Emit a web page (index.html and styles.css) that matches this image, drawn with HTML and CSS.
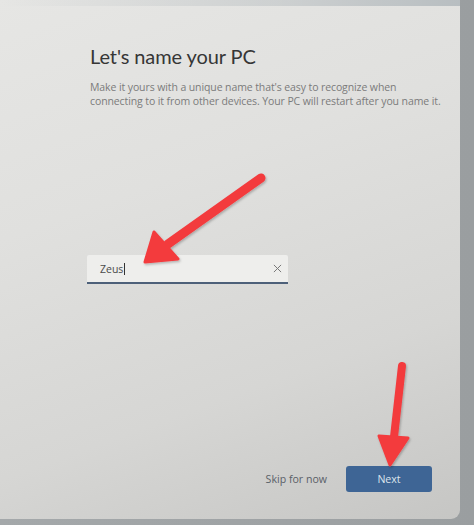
FILE: index.html
```html
<!DOCTYPE html>
<html lang="en">
<head>
<meta charset="utf-8">
<title>Let's name your PC</title>
<link rel="stylesheet" href="styles.css">
</head>
<body>
<div class="bezel">
  <main class="screen">
    <div class="topglow"></div>
    <section class="content">
      <h1 class="title">Let's name your PC</h1>
      <p class="desc">Make it yours with a unique name that's easy to recognize when<br>connecting to it from other devices. Your PC will restart after you name it.</p>
      <div class="field">
        <span class="value">Zeus</span><span class="caret"></span>
        <svg class="clear" viewBox="0 0 10 10" width="9" height="9"><path d="M1 1 L9 9 M9 1 L1 9" stroke="#777" stroke-width="1.1" fill="none"/></svg>
      </div>
    </section>
    <footer class="actions">
      <span class="skip">Skip for now</span>
      <span class="next">Next</span>
    </footer>
  </main>
  <svg class="arrows" viewBox="0 0 474 525" width="474" height="525">
    <defs>
      <filter id="sh" x="-20%" y="-20%" width="140%" height="140%">
        <feDropShadow dx="1" dy="1.5" stdDeviation="1.2" flood-color="#000" flood-opacity="0.25"/>
      </filter>
    </defs>
    <g filter="url(#sh)" fill="#f33b3e" stroke="#f33b3e">
      <path d="M261 178 L168 244" stroke-width="9" stroke-linecap="round" fill="none"/>
      <path d="M145 262 L154 232 L178 259 Z" stroke-width="3" stroke-linejoin="round"/>
      <path d="M402 366 L394 437" stroke-width="8" stroke-linecap="round" fill="none"/>
      <path d="M390 465 L379 436 L408 438 Z" stroke-width="3" stroke-linejoin="round"/>
    </g>
  </svg>
</div>
</body>
</html>
```
FILE: styles.css
```css
html, body {
  margin: 0;
  padding: 0;
}
body {
  width: 474px;
  height: 525px;
  overflow: hidden;
  background: #9ea2a4;
  font-family: "Open Sans", "Noto Sans", sans-serif;
}
.bezel {
  position: relative;
  width: 474px;
  height: 525px;
  background: linear-gradient(90deg, #a4a8aa 0%, #9a9ea0 100%);
}
.screen {
  position: relative;
  width: 460px;
  height: 519px;
  border-radius: 0 0 9px 0;
  background:
    linear-gradient(160deg, #e6e6e4 0%, #e0e0de 35%, #d6d6d4 70%, #c6c6c4 100%);
  display: flex;
  flex-direction: column;
  box-sizing: border-box;
}
.topglow {
  position: absolute;
  left: 0;
  top: 0;
  right: 0;
  height: 6px;
  background: linear-gradient(90deg, rgba(190,196,198,0) 0%, rgba(184,190,193,0.5) 60%, #b8bec1 100%);
}
.content {
  padding-left: 90px;
  padding-top: 43px;
}
.title {
  margin: 0;
  font-family: "Lato", "Open Sans", sans-serif;
  font-size: 20px;
  line-height: 26px;
  font-weight: 400;
  color: #363636;
  letter-spacing: -0.1px;
}
.desc {
  margin: 12px 0 0;
  font-size: 10.5px;
  line-height: 13.5px;
  color: #7b7b7b;
  letter-spacing: -0.1px;
}
.field {
  margin-top: 147px;
  margin-left: -3px;
  width: 201px;
  height: 29px;
  box-sizing: border-box;
  background: #eeeeec;
  border-bottom: 2px solid #4d6079;
  border-radius: 2px 2px 0 0;
  display: flex;
  align-items: center;
  padding-left: 13px;
  padding-right: 6px;
  font-size: 10.5px;
  color: #4a4a4a;
}
.caret {
  width: 1px;
  height: 12px;
  background: #333;
  margin-left: 1px;
}
.clear {
  margin-left: auto;
}
.actions {
  margin-top: auto;
  display: flex;
  justify-content: flex-end;
  align-items: center;
  gap: 19px;
  padding: 0 28px 27px 0;
}
.skip {
  font-size: 10.6px;
  color: #5a6068;
}
.next {
  width: 86px;
  height: 26px;
  border-radius: 3px;
  background: #3e6595;
  color: #dde4ec;
  font-size: 10.6px;
  display: flex;
  align-items: center;
  justify-content: center;
}
.arrows {
  position: absolute;
  left: 0;
  top: 0;
  pointer-events: none;
}
```
